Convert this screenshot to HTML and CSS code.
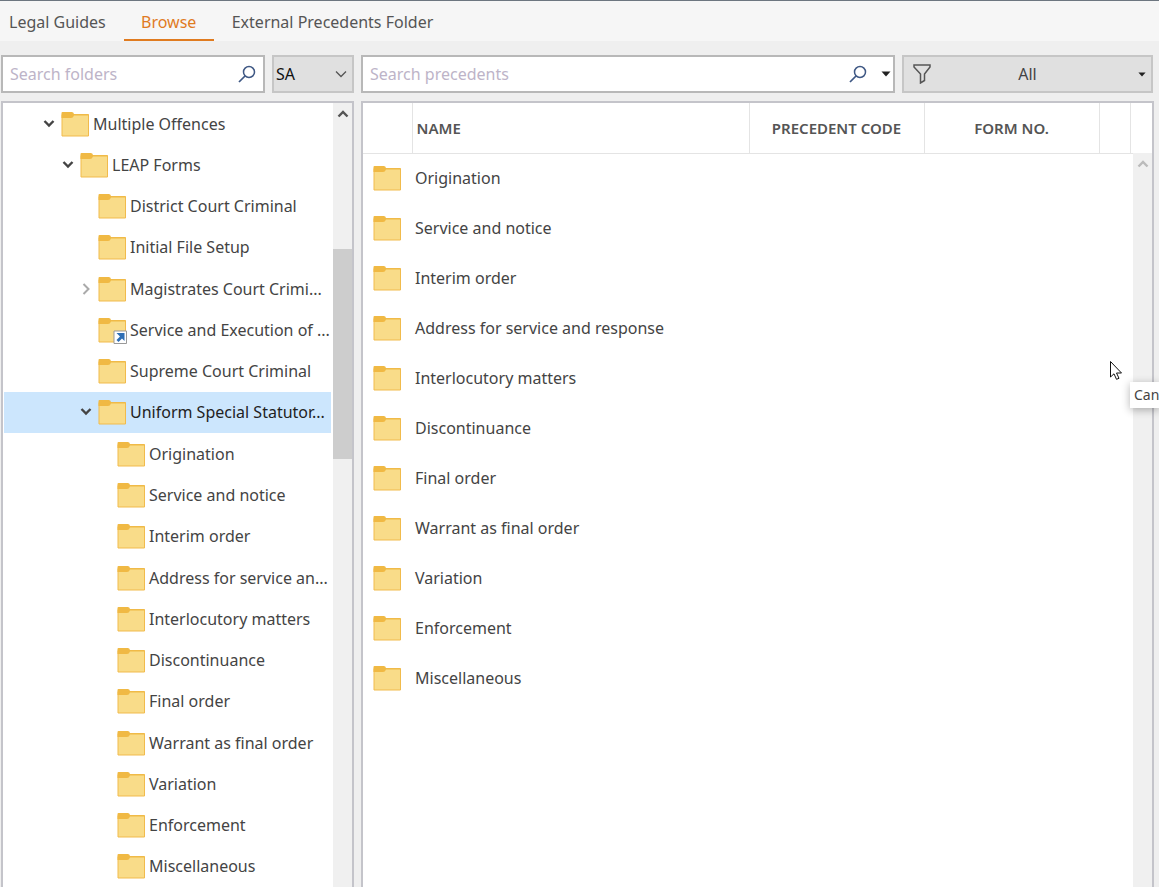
FILE: index.html
```html
<!DOCTYPE html>
<html lang="en">
<head>
    <meta charset="UTF-8">
    <meta name="viewport" content="width=device-width, initial-scale=1">
    <title>Precedents</title>
    <link rel="stylesheet" href="styles.css">
</head>
<body>
<!-- shared icons -->
<svg class="defs" width="0" height="0">
    <symbol id="folder" viewBox="0 0 28 26">
        <path d="M1 3.500h26.500v21.500H1z" fill="#f9dc89" stroke="#f1bb4c"/>
        <path d="M0.500 2q0-1 1-1h9.500q2 0 2 2.500h14.500v1H13q-1 2.500-3 2.500H0.500z" fill="#f0b944"/>
    </symbol>
    <symbol id="search" viewBox="0 0 18 18">
        <circle cx="11" cy="7" r="5.500" fill="none" stroke="#3f5884" stroke-width="1.500"/>
        <path d="M7 11L1 17" fill="none" stroke="#3f5884" stroke-width="1.700"/>
    </symbol>
    <symbol id="down" viewBox="0 0 12 12">
        <path d="M1.500 3L6 7.500l4.500-4.500" fill="none" stroke="currentColor" stroke-width="2.400"/>
    </symbol>
    <symbol id="right" viewBox="0 0 12 12">
        <path d="M3.500 1L8.500 6l-5 5" fill="none" stroke="currentColor" stroke-width="2"/>
    </symbol>
    <symbol id="up" viewBox="0 0 12 12">
        <path d="M1.500 8.500L6 4l4.500 4.500" fill="none" stroke="currentColor" stroke-width="2.400"/>
    </symbol>
    <symbol id="caret" viewBox="0 0 10 6">
        <path d="M0.500 0.500h9L5 5.500z" fill="currentColor"/>
    </symbol>
</svg>

<nav class="tabs">
    <a href="#">Legal Guides</a>
    <a href="#" class="selected">Browse</a>
    <a href="#">External Precedents Folder</a>
</nav>

<div class="main">
    <div class="side">
        <div class="toolbar">
            <label class="search">
                <input type="text" placeholder="Search folders" aria-label="Search folders">
                <svg class="glass"><use href="#search"/></svg>
            </label>
            <div class="state">
                <select aria-label="State">
                    <option>SA</option>
                </select>
                <svg class="select-arrow" viewBox="0 0 12 12"><path d="M1 3.500l5 5 5-5" fill="none" stroke="#555" stroke-width="1.300"/></svg>
            </div>
        </div>
        <div class="panel">
            <ul class="tree">
                <li class="level1"><svg class="arrow"><use href="#down"/></svg><svg class="folder"><use href="#folder"/></svg><span>Multiple Offences</span></li>
                <li class="level2"><svg class="arrow"><use href="#down"/></svg><svg class="folder"><use href="#folder"/></svg><span>LEAP Forms</span></li>
                <li class="level3"><i class="arrow"></i><svg class="folder"><use href="#folder"/></svg><span>District Court Criminal</span></li>
                <li class="level3"><i class="arrow"></i><svg class="folder"><use href="#folder"/></svg><span>Initial File Setup</span></li>
                <li class="level3"><svg class="arrow closed"><use href="#right"/></svg><svg class="folder"><use href="#folder"/></svg><span>Magistrates Court Crimi...</span></li>
                <li class="level3"><i class="arrow"></i><svg class="folder" viewBox="0 0 28 26"><use href="#folder" width="28" height="26"/><path d="M16 14h12.500v12.500H16z" fill="#fff" stroke="#999"/><path d="M18.500 16h8v8l-2.500-2.500-3.500 3.500-2-2 3.500-3.500z" fill="#2f6fb5"/></svg><span>Service and Execution of ...</span></li>
                <li class="level3"><i class="arrow"></i><svg class="folder"><use href="#folder"/></svg><span>Supreme Court Criminal</span></li>
                <li class="level3 selected"><svg class="arrow"><use href="#down"/></svg><svg class="folder"><use href="#folder"/></svg><span>Uniform Special Statutor...</span></li>
                <li class="level4"><i class="arrow"></i><svg class="folder"><use href="#folder"/></svg><span>Origination</span></li>
                <li class="level4"><i class="arrow"></i><svg class="folder"><use href="#folder"/></svg><span>Service and notice</span></li>
                <li class="level4"><i class="arrow"></i><svg class="folder"><use href="#folder"/></svg><span>Interim order</span></li>
                <li class="level4"><i class="arrow"></i><svg class="folder"><use href="#folder"/></svg><span>Address for service an...</span></li>
                <li class="level4"><i class="arrow"></i><svg class="folder"><use href="#folder"/></svg><span>Interlocutory matters</span></li>
                <li class="level4"><i class="arrow"></i><svg class="folder"><use href="#folder"/></svg><span>Discontinuance</span></li>
                <li class="level4"><i class="arrow"></i><svg class="folder"><use href="#folder"/></svg><span>Final order</span></li>
                <li class="level4"><i class="arrow"></i><svg class="folder"><use href="#folder"/></svg><span>Warrant as final order</span></li>
                <li class="level4"><i class="arrow"></i><svg class="folder"><use href="#folder"/></svg><span>Variation</span></li>
                <li class="level4"><i class="arrow"></i><svg class="folder"><use href="#folder"/></svg><span>Enforcement</span></li>
                <li class="level4"><i class="arrow"></i><svg class="folder"><use href="#folder"/></svg><span>Miscellaneous</span></li>
            </ul>
            <div class="scrollbar">
                <svg><use href="#up"/></svg>
                <div class="thumb"></div>
            </div>
        </div>
    </div>

    <div class="content">
        <div class="toolbar">
            <label class="search">
                <input type="text" placeholder="Search precedents" aria-label="Search precedents">
                <svg class="glass"><use href="#search"/></svg>
                <svg class="caret"><use href="#caret"/></svg>
            </label>
            <button type="button" class="filter">
                <svg class="funnel" viewBox="0 0 18 20"><path d="M1 1h16v2l-5.500 7v6.500L7.500 19v-9L1 3z" fill="none" stroke="#555" stroke-width="1.500"/></svg>
                <span>All</span>
                <svg class="caret"><use href="#caret"/></svg>
            </button>
        </div>
        <div class="panel list">
            <table>
                <colgroup>
                    <col class="col-icon"><col><col class="col-code"><col class="col-code"><col class="col-small"><col class="col-end">
                </colgroup>
                <thead>
                    <tr><th></th><th class="name">NAME</th><th>PRECEDENT CODE</th><th>FORM NO.</th><th></th><th></th></tr>
                </thead>
                <tbody>
                    <tr><td><svg class="folder"><use href="#folder"/></svg></td><td colspan="5">Origination</td></tr>
                    <tr><td><svg class="folder"><use href="#folder"/></svg></td><td colspan="5">Service and notice</td></tr>
                    <tr><td><svg class="folder"><use href="#folder"/></svg></td><td colspan="5">Interim order</td></tr>
                    <tr><td><svg class="folder"><use href="#folder"/></svg></td><td colspan="5">Address for service and response</td></tr>
                    <tr><td><svg class="folder"><use href="#folder"/></svg></td><td colspan="5">Interlocutory matters</td></tr>
                    <tr><td><svg class="folder"><use href="#folder"/></svg></td><td colspan="5">Discontinuance</td></tr>
                    <tr><td><svg class="folder"><use href="#folder"/></svg></td><td colspan="5">Final order</td></tr>
                    <tr><td><svg class="folder"><use href="#folder"/></svg></td><td colspan="5">Warrant as final order</td></tr>
                    <tr><td><svg class="folder"><use href="#folder"/></svg></td><td colspan="5">Variation</td></tr>
                    <tr><td><svg class="folder"><use href="#folder"/></svg></td><td colspan="5">Enforcement</td></tr>
                    <tr><td><svg class="folder"><use href="#folder"/></svg></td><td colspan="5">Miscellaneous</td></tr>
                </tbody>
            </table>
            <div class="scrollbar">
                <svg><use href="#up"/></svg>
            </div>
        </div>
    </div>
</div>

<svg class="cursor" viewBox="0 0 12 19"><path d="M0.500 0.500v15.500l3.500-3.200 2.500 5.500 2.500-1-2.500-5.300h5z" fill="#fff" stroke="#111"/></svg>
<div class="tooltip">Can</div>
</body>
</html>
```
FILE: styles.css
```css
*{
    margin: 0;
    padding: 0;
    box-sizing: border-box;
}
body{
    display: flex;
    flex-direction: column;
    height: 100vh;
    overflow: hidden;
    background: #efefef;
    border-top: 1px solid #6d7680;
    font-family: "Noto Sans", "Open Sans", sans-serif;
    font-size: 16px;
    color: #444;
}
ul{
    list-style: none;
}
svg{
    display: block;
    flex: none;
}
.defs{
    position: absolute;
}

/* tabs */
.tabs{
    display: flex;
    gap: 18px;
    height: 40px;
    padding-left: 9px;
    background: #f6f6f6;
}
.tabs a{
    color: #555;
    line-height: 42px;
    text-decoration: none;
    white-space: nowrap;
}
.tabs .selected{
    width: 90px;
    text-align: center;
    color: #e07b1f;
    border-bottom: 2px solid #e07b1f;
}

/* layout */
.main{
    flex: 1;
    min-height: 0;
    display: flex;
    gap: 7px;
    padding: 14px 5px 0 1px;
}
.side, .content{
    display: flex;
    flex-direction: column;
    gap: 8px;
}
.side{
    flex: none;
    width: 353px;
}
.content{
    flex: 1;
    min-width: 0;
}
.toolbar{
    display: flex;
    gap: 7px;
    height: 38px;
}
.content .toolbar{
    padding-right: 1px;
}
.panel{
    flex: 1;
    min-height: 0;
    display: flex;
    background: #fff;
    border: 2px solid #c4c4ca;
    border-bottom: 0;
}

/* toolbar controls */
.search{
    flex: 1;
    min-width: 0;
    display: flex;
    align-items: center;
    background: #fff;
    border: 2px solid #b8b8b8;
    padding: 0 7px;
}
.search input{
    flex: 1;
    min-width: 0;
    border: 0;
    outline: 0;
    background: none;
    font: inherit;
    color: #333;
}
.search input::placeholder{
    color: #bdb4c8;
    opacity: 1;
}
.glass{
    width: 18px;
    height: 18px;
}
.caret{
    width: 10px;
    height: 6px;
    color: #222;
}
.content .search{
    padding-right: 2px;
}
.search .caret{
    margin-left: 14px;
}
.state{
    flex: none;
    display: grid;
    align-items: center;
    width: 82px;
}
.state select, .select-arrow{
    grid-area: 1 / 1;
}
.state select{
    height: 38px;
    padding-left: 2px;
    appearance: none;
    border: 2px solid #c6c6c6;
    border-radius: 0;
    background: #e0e0e0;
    font: inherit;
    color: #111;
}
.select-arrow{
    justify-self: end;
    width: 12px;
    height: 12px;
    margin-right: 7px;
    pointer-events: none;
}
.filter{
    flex: none;
    display: grid;
    grid-template-columns: 18px 1fr 18px;
    align-items: center;
    width: 251px;
    padding: 0 5px 0 9px;
    border: 2px solid #c6c6c6;
    background: #e0e0e0;
    font: inherit;
    color: #444;
}
.filter span{
    padding-right: 4px;
}
.funnel{
    width: 18px;
    height: 20px;
}
.filter .caret{
    justify-self: end;
    width: 8px;
    height: 5px;
}

/* folder tree */
.tree{
    flex: 1;
    min-width: 0;
    display: flex;
    flex-direction: column;
    padding: 0 2px 0 1px;
}
.tree li{
    flex: 1;
    display: flex;
    align-items: center;
    min-height: 41px;
    color: #444;
    white-space: nowrap;
}
.tree .selected{
    background: #cce6fd;
    color: #222;
}
.level1{
    padding-left: 39px;
}
.level2{
    padding-left: 58px;
}
.level3{
    padding-left: 76px;
}
.level4{
    padding-left: 95px;
}
.arrow{
    flex: none;
    width: 12px;
    height: 12px;
    margin-right: 6px;
    color: #444;
}
.closed{
    color: #aaa;
}
.folder{
    width: 28px;
    height: 26px;
    margin-right: 4px;
    overflow: visible;
}

.scrollbar{
    flex: none;
    width: 19px;
    background: #f0f0f0;
    color: #555;
}
.scrollbar svg{
    width: 12px;
    height: 12px;
    margin: 5px auto 0;
}
.scrollbar .thumb{
    height: 210px;
    margin-top: 129px;
    background: #cdcdcd;
}

/* precedent list */
.list{
    position: relative;
    align-items: flex-start;
}
.list .scrollbar{
    position: absolute;
    top: 50px;
    right: 0;
    bottom: 0;
    color: #bbb;
}
.list table{
    width: 100%;
    table-layout: fixed;
    border-collapse: collapse;
}
.col-icon{
    width: 49px;
}
.col-code{
    width: 175px;
}
.col-small{
    width: 31px;
}
.col-end{
    width: 22px;
}
.list th{
    height: 50px;
    border-right: 1px solid #e4e4e4;
    border-bottom: 1px solid #e4e4e4;
    font-size: 15px;
    font-weight: 600;
    color: #555;
    white-space: nowrap;
}
.list th:last-child{
    border-right: 0;
}
.list .name{
    padding-left: 4px;
    text-align: left;
}
.list td{
    height: 50px;
    padding-left: 3px;
}
.list td:first-child{
    padding-left: 10px;
}

/* pointer and its hint */
.cursor{
    position: absolute;
    left: 1110px;
    top: 361px;
    width: 12px;
    height: 19px;
}
.tooltip{
    position: absolute;
    left: 1130px;
    top: 382px;
    width: 29px;
    height: 26px;
    padding-left: 4px;
    overflow: hidden;
    background: #fff;
    box-shadow: 0 2px 8px rgba(0, 0, 0, 0.3);
    font-size: 14px;
    line-height: 26px;
    color: #444;
}
```
